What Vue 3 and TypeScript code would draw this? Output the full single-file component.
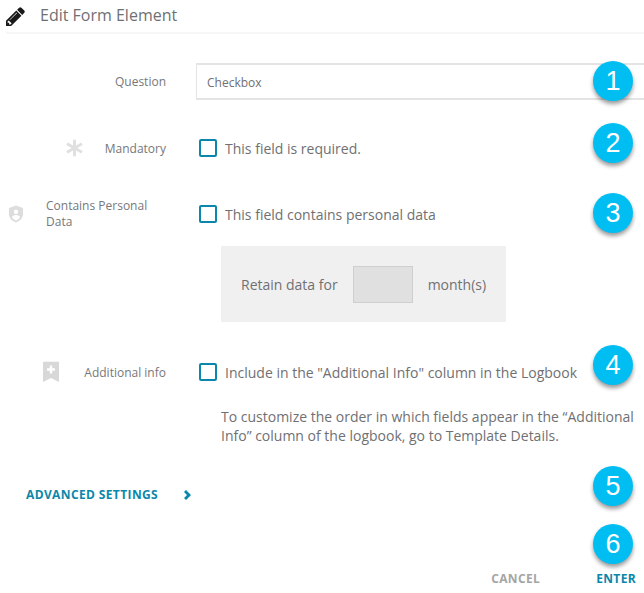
<template>
  <div class="dialog">
    <header class="head">
      <svg class="pencil" viewBox="128 128 1536 1536" width="19" height="19">
        <path d="M491 1536l91-91-235-235-91 91v107h128v128h107zm523-928q0-22-22-22-10 0-17 7l-542 542q-7 7-7 17 0 22 22 22 10 0 17-7l542-542q7-7 7-17zm-54-192l416 416-832 832h-416v-416zm683 96q0 53-37 90l-166 166-416-416 166-165q36-38 90-38 53 0 91 38l235 234q37 39 37 91z" fill="#1a1a1a" />
      </svg>
      <h1>Edit Form Element</h1>
    </header>

    <div class="row row-question">
      <div class="label"><span>Question</span></div>
      <div class="question-box">Checkbox</div>
    </div>

    <template v-for="opt in options" :key="opt.key">
      <div class="row" :class="`row-${opt.key}`">
        <div class="label">
          <svg v-if="opt.key === 'mandatory'" class="ic ic-star" viewBox="0 0 17 17" width="17" height="17">
            <path d="M8.500 0 V17 M1 4.200 L16 12.800 M16 4.200 L1 12.800" stroke="#e0e0e0" stroke-width="3" fill="none" />
          </svg>
          <svg v-else-if="opt.key === 'personal'" class="ic ic-shield" viewBox="0 0 16 18" width="16" height="18">
            <path fill-rule="evenodd" d="M8 0.500 L15 3 V9 C15 13 12 16 8 17.500 C4 16 1 13 1 9 V3 Z M8 4.500 a2.200 2.200 0 1 0 0 4.400 a2.200 2.200 0 0 0 0 -4.400 Z M3.800 12 C5 14 6.500 15 8 15.600 C9.500 15 11 14 12.200 12 C11 10.400 9.500 10 8 10 C6.500 10 5 10.400 3.800 12 Z" fill="#dcdcdc" />
          </svg>
          <svg v-else class="ic ic-mark" viewBox="0 0 16 21" width="16" height="21">
            <path fill-rule="evenodd" d="M0 0 H16 V20.500 L8 16.500 L0 20.500 Z M6.800 4 V6.800 H4 V9.200 H6.800 V12 H9.200 V9.200 H12 V6.800 H9.200 V4 Z" fill="#d8d8d8" />
          </svg>
          <span>{{ opt.label }}</span>
        </div>
        <label class="check">
          <span class="box"></span>
          <span>{{ opt.text }}</span>
        </label>
      </div>

      <div v-if="opt.key === 'personal'" class="retain">
        <span>Retain data for</span>
        <span class="months"></span>
        <span>month(s)</span>
      </div>
    </template>

    <p class="hint">To customize the order in which fields appear in the “Additional Info” column of the logbook, go to Template Details.</p>

    <div class="advanced">
      <span>ADVANCED SETTINGS</span>
      <svg viewBox="0 0 8 10" width="8" height="10">
        <path d="M3 0 L8 5 L3 10 L1 8 L4 5 L1 2 Z" fill="#0b87ab" />
      </svg>
    </div>

    <footer class="foot">
      <button type="button" class="cancel">CANCEL</button>
      <button type="button" class="enter">ENTER</button>
    </footer>

    <div v-for="b in badges" :key="b.n" class="badge" :style="{ top: `${b.top}px` }">{{ b.n }}</div>
  </div>
</template>

<script setup lang="ts">
interface Option { key: string; label: string; text: string }

const options: Option[] = [
  { key: 'mandatory', label: 'Mandatory', text: 'This field is required.' },
  { key: 'personal', label: 'Contains Personal Data', text: 'This field contains personal data' },
  { key: 'info', label: 'Additional info', text: 'Include in the "Additional Info" column in the Logbook' },
]

// callouts sit on top of the form, not part of it
const badges = [
  { n: 1, top: 61 },
  { n: 2, top: 123 },
  { n: 3, top: 193 },
  { n: 4, top: 345 },
  { n: 5, top: 466 },
  { n: 6, top: 524 },
]
</script>

<style>
html, body { margin: 0; background: #fff; }
</style>

<style scoped>
.dialog {
  position: relative;
  width: 644px;
  height: 593px;
  overflow: hidden;
  background: #fff;
  font-family: "Open Sans", sans-serif;
  color: #707073;
}
.head {
  display: flex;
  align-items: center;
  gap: 15px;
  height: 32px;
  margin-left: 6px;
  border-bottom: 2px solid #f6f6f6;
}
.pencil { flex: none; margin-top: 1px; }
.head h1 {
  margin: 0 0 2px;
  font-size: 16px;
  font-weight: 400;
  color: #707073;
}
.row { display: flex; align-items: center; }
.label {
  flex: none;
  position: relative;
  width: 166px;
  text-align: right;
  font-size: 12px;
  line-height: 16px;
  color: #77777a;
}
.row-question { margin-top: 29px; height: 37px; }
.question-box {
  flex: none;
  width: 470px;
  height: 37px;
  margin-left: 30px;
  padding-left: 10px;
  box-sizing: border-box;
  border: 2px solid #e4e4e4;
  border-right: 0;
  border-left-width: 1px;
  font-size: 12px;
  line-height: 35px;
  color: #707073;
}
.row-mandatory { margin-top: 30px; height: 36px; }
.row-mandatory .label { top: 1px; }
.row-mandatory .ic { margin-top: -1px; }
.row-personal { margin-top: 30px; height: 36px; }
.row-info { margin-top: 32px; height: 36px; }
.row-info .label span { position: relative; top: 1px; }
.row-personal .label { text-align: left; padding-left: 46px; box-sizing: border-box; }
.ic { position: absolute; top: 50%; transform: translateY(-50%); }
.ic-star { left: 66px; }
.ic-shield { left: 8px; }
.ic-mark { left: 43px; }
.check {
  display: flex;
  align-items: center;
  gap: 8px;
  margin-left: 33px;
  font-size: 14px;
  color: #707073;
  white-space: nowrap;
}
.box {
  flex: none;
  width: 18px;
  height: 18px;
  box-sizing: border-box;
  border: 2px solid #0b87ab;
  border-radius: 2px;
}
.retain {
  display: flex;
  align-items: center;
  width: 285px;
  height: 76px;
  margin: 14px 0 0 221px;
  padding-left: 20px;
  box-sizing: border-box;
  background: #f1f0f1;
  font-size: 14px;
  color: #707073;
}
.months {
  width: 60px;
  height: 37px;
  margin: 0 15px;
  box-sizing: border-box;
  background: #e0e0e0;
  border: 1px solid #cfcfcf;
}
.hint {
  width: 420px;
  margin: 17px 0 0 221px;
  font-size: 14px;
  line-height: 19px;
  color: #707073;
}
.advanced {
  display: flex;
  align-items: center;
  gap: 25px;
  margin: 42px 0 0 26px;
  font-size: 12px;
  font-weight: 700;
  line-height: 16px;
  letter-spacing: 0.38px;
  color: #0b87ab;
}
.foot {
  position: absolute;
  right: 8px;
  bottom: 6px;
  display: flex;
  gap: 56px;
}
.foot button {
  padding: 0;
  border: 0;
  background: none;
  font: 700 12px/16px "Open Sans", sans-serif;
  letter-spacing: 0.35px;
}
.cancel { color: #a5a5a5; }
.enter { color: #0b87ab; }
.badge {
  position: absolute;
  left: 593px;
  width: 40px;
  height: 40px;
  border-radius: 50%;
  background: #00bef2;
  color: #fff;
  box-shadow: 0 3px 4px rgba(0, 0, 0, 0.4);
  font: 400 27px/40px "Liberation Sans", Arial, sans-serif;
  text-align: center;
}
</style>
